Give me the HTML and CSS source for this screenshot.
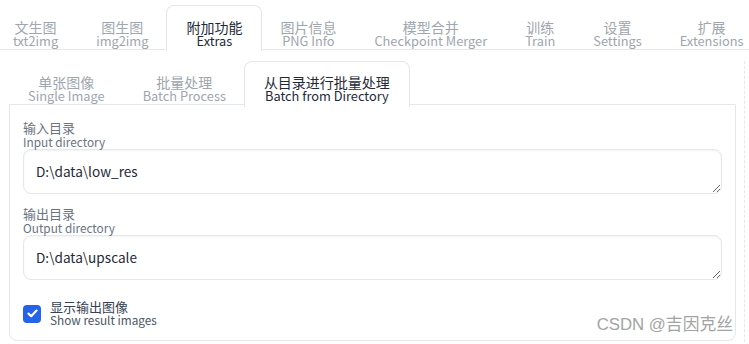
FILE: index.html
```html
<!DOCTYPE html>
<html lang="zh-CN">
<head>
    <meta charset="UTF-8">
    <title>Extras</title>
    <link rel="stylesheet" href="styles.css">
</head>
<body>

<div class="top-tabs">
    <div class="tab"><span class="zh">文生图</span><span class="en">txt2img</span></div>
    <div class="tab"><span class="zh">图生图</span><span class="en">img2img</span></div>
    <div class="tab active"><span class="zh">附加功能</span><span class="en">Extras</span></div>
    <div class="tab"><span class="zh">图片信息</span><span class="en">PNG Info</span></div>
    <div class="tab"><span class="zh">模型合并</span><span class="en">Checkpoint Merger</span></div>
    <div class="tab"><span class="zh">训练</span><span class="en">Train</span></div>
    <div class="tab"><span class="zh">设置</span><span class="en">Settings</span></div>
    <div class="tab"><span class="zh">扩展</span><span class="en">Extensions</span></div>
</div>

<div class="extras">
    <div class="sub-tabs">
        <div class="tab"><span class="zh">单张图像</span><span class="en">Single Image</span></div>
        <div class="tab"><span class="zh">批量处理</span><span class="en">Batch Process</span></div>
        <div class="tab active"><span class="zh">从目录进行批量处理</span><span class="en">Batch from Directory</span></div>
    </div>

    <div class="panel">
        <div class="field">
            <label for="input-dir"><span class="zh">输入目录</span><span class="en">Input directory</span></label>
            <textarea id="input-dir" rows="1">D:\data\low_res</textarea>
        </div>

        <div class="field">
            <label for="output-dir"><span class="zh">输出目录</span><span class="en">Output directory</span></label>
            <textarea id="output-dir" rows="1">D:\data\upscale</textarea>
        </div>

        <label class="check">
            <input type="checkbox" checked>
            <span class="box">
                <svg width="11" height="9" viewBox="0 0 11 9"><path d="M1.5 4.6 L4.2 7.2 L9.5 1.6" fill="none" stroke="#fff" stroke-width="2.2" stroke-linecap="round" stroke-linejoin="round"/></svg>
            </span>
            <span class="check-text"><span class="zh">显示输出图像</span><span class="en">Show result images</span></span>
        </label>

        <div class="watermark">CSDN @吉因克丝</div>
    </div>
</div>

</body>
</html>
```

FILE: styles.css
```css
body {
    margin: 0;
    background-color: white;
    font-family: "Noto Sans CJK SC", "Noto Sans", sans-serif;
    overflow: hidden;
}
.zh, .en {
    display: block;
    white-space: nowrap;
}
.top-tabs {
    display: flex;
    margin-left: -6px;
    padding-top: 5px;
    border-bottom: 1px solid #e5e7eb;
    height: 44px;
}
.tab {
    padding: 14px 19px 2px;
    font-size: 14px;
    line-height: 14px;
    text-align: center;
    color: #a0a5ae;
    border: 1px solid transparent;
    border-bottom: none;
    border-radius: 8px 8px 0 0;
}
.tab .en {
    font-size: 12.8px;
}
.top-tabs .tab {
    margin: 0 -1px;
}
.tab.active {
    color: #1f2937;
    border-color: #e5e7eb;
    background-color: white;
    height: 29px;
    position: relative;
    z-index: 1;
}
.extras {
    margin: 11px 4px 0 0;
    padding: 0 8px 6px 9px;
    border-right: 1px dashed #e5e7eb;
}
.sub-tabs {
    display: flex;
    height: 44px;
}
.sub-tabs .tab {
    padding-top: 13px;
    margin: 0 -1px;
}
.sub-tabs .tab:first-child {
    margin-left: -1px;
}
.sub-tabs .tab.active {
    height: 30px;
}
.panel {
    position: relative;
    border: 1px solid #e5e7eb;
    border-radius: 0 0 8px 8px;
    padding: 16px 13px 14px;
    margin-top: -1px;
}
.field {
    margin-bottom: 13px;
}
label {
    display: block;
    font-size: 13px;
    line-height: 13.5px;
    color: #6b7280;
}
label .en {
    font-size: 11.8px;
}
textarea {
    display: block;
    box-sizing: border-box;
    width: 100%;
    height: 45px;
    margin-top: 1px;
    padding: 10px 12px;
    font-family: "Noto Sans CJK SC", "Noto Sans", sans-serif;
    font-size: 13.6px;
    line-height: 22px;
    color: #1f2937;
    border: 1px solid #e5e7eb;
    border-radius: 8px;
    box-shadow: inset 0 1px 2px rgba(0, 0, 0, 0.05);
    outline: none;
    resize: vertical;
    overflow: hidden;
}
.check {
    display: flex;
    align-items: center;
    gap: 9px;
    margin-top: 21px;
}
.check input {
    display: none;
}
.box {
    width: 18px;
    height: 18px;
    border-radius: 4px;
    background-color: #2563eb;
    display: flex;
    align-items: center;
    justify-content: center;
}
.check-text {
    color: #374151;
    font-size: 13px;
    line-height: 12.5px;
}
.check-text .en {
    font-size: 11.8px;
    color: #4b5563;
}
.watermark {
    position: absolute;
    right: 2px;
    bottom: 5px;
    font-family: "Liberation Sans", "Noto Sans CJK SC", sans-serif;
    font-size: 16.8px;
    color: #a3a3a3;
    text-shadow: 0 0 2px white;
}
```
